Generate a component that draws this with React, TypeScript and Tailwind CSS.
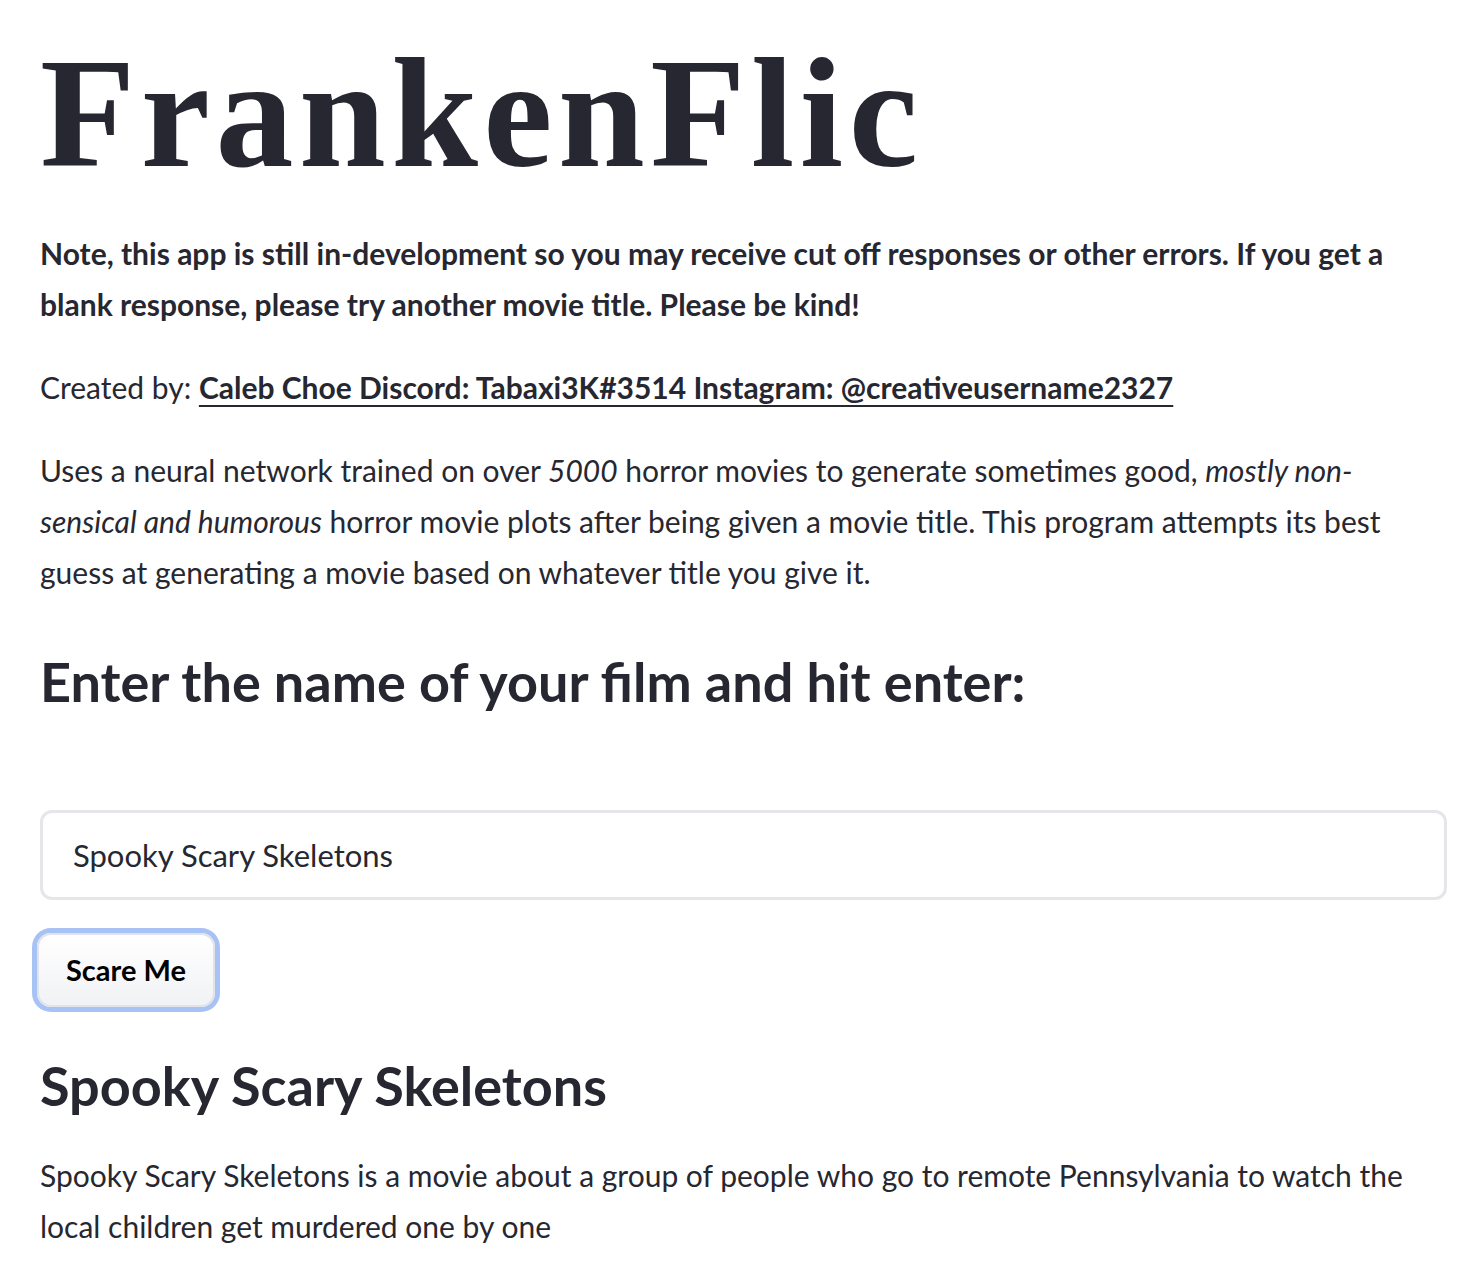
const body = "font-['Lato',_'Noto_Sans',_sans-serif]";

export default function App() {
  return (
    <div className={`min-h-screen bg-white text-[#262730] ${body}`}>
      <div className="pl-[40px] pr-[13px] pt-[34px]">
        <h1 className="font-['Liberation_Serif',_serif] text-[156px] font-bold leading-[160px] tracking-[0.035em]">
          FrankenFlic
        </h1>

        <div className="mt-[34px] text-[30px] leading-[51px]">
          <p className="font-bold">
            Note, this app is still in-development so you may receive cut off responses or other errors. If you get a
            blank response, please try another movie title. Please be kind!
          </p>
          <p className="mt-[32px]">
            Created by:{' '}
            <a href="#" className="font-bold underline underline-offset-[6px] decoration-[2px]">
              Caleb Choe Discord: Tabaxi3K#3514 Instagram: @creativeusername2327
            </a>
          </p>
          <p className="mt-[32px]">
            Uses a neural network trained on over <em>5000</em> horror movies to generate sometimes good,{' '}
            <em>mostly non-sensical and humorous</em> horror movie plots after being given a movie title. This program
            attempts its best guess at generating a movie based on whatever title you give it.
          </p>
        </div>

        <h3 className="mt-[48px] text-[54px] font-bold leading-[72px]">Enter the name of your film and hit enter:</h3>

        <div className="mt-[92px] rounded-[12px] border-[3px] border-[#e6e6ea] bg-white px-[30px] py-[20px] text-[31px] leading-[44px]">
          Spooky Scary Skeletons
        </div>

        <button className="mt-[33px] -ml-[3px] rounded-[14px] border-[2px] border-[#e2e3e8] bg-gradient-to-b from-white to-[#f1f2f5] px-[27px] py-[13px] text-[29px] font-bold leading-[44px] text-black ring-[5px] ring-[#a7c2f4]">
          Scare Me
        </button>

        <h3 className="mt-[43px] text-[54px] font-bold leading-[72px]">Spooky Scary Skeletons</h3>

        <p className="mt-[28px] text-[30px] leading-[51px]">
          Spooky Scary Skeletons is a movie about a group of people who go to remote Pennsylvania to watch the local
          children get murdered one by one
        </p>
      </div>
    </div>
  );
}
